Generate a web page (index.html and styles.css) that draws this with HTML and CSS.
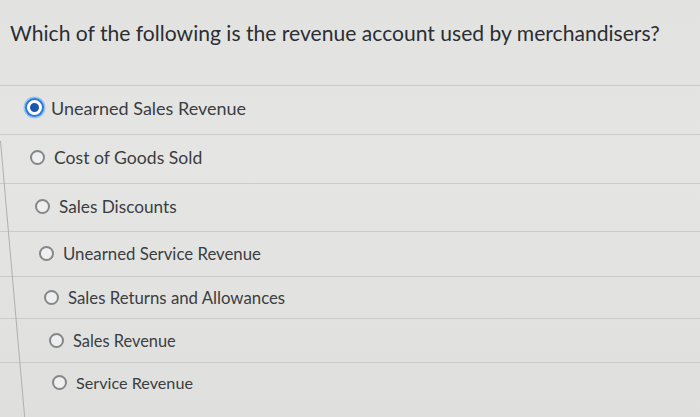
FILE: index.html
```html
<!DOCTYPE html>
<html>
<head>
<meta charset="utf-8">
<link rel="stylesheet" href="styles.css">
</head>
<body>
<div class="quiz">
  <div class="question">Which of the following is the revenue account used by merchandisers?</div>
  <ul class="answers">
    <li class="answer a1"><span class="radio selected"></span><span class="label">Unearned Sales Revenue</span></li>
    <li class="answer a2"><span class="radio"></span><span class="label">Cost of Goods Sold</span></li>
    <li class="answer a3"><span class="radio"></span><span class="label">Sales Discounts</span></li>
    <li class="answer a4"><span class="radio"></span><span class="label">Unearned Service Revenue</span></li>
    <li class="answer a5"><span class="radio"></span><span class="label">Sales Returns and Allowances</span></li>
    <li class="answer a6"><span class="radio"></span><span class="label">Sales Revenue</span></li>
    <li class="answer a7"><span class="radio"></span><span class="label">Service Revenue</span></li>
  </ul>
</div>
</body>
</html>
```
FILE: styles.css
```css
html, body {
  margin: 0;
  padding: 0;
}
body {
  width: 700px;
  height: 417px;
  overflow: hidden;
  background: linear-gradient(180deg, #e2e3e1 0%, #e5e6e4 40%, #dfe0de 100%);
  font-family: Lato, "Open Sans", sans-serif;
  color: #3a3d41;
}
.quiz {
  position: relative;
}
.question {
  border-bottom: 1px solid #c9cac8;
  padding-left: 10px;
  font-size: 21.1px;
  line-height: 24px;
  padding-top: 21px;
  height: 64px;
  color: #2b2e33;
}
.answers {
  list-style: none;
  margin: 0;
  padding: 0;
  position: relative;
}
.answers::before {
  content: "";
  position: absolute;
  left: 0;
  top: 55px;
  bottom: -10px;
  width: 0;
  border-left: 1px solid #aeb0ae;
  transform-origin: top left;
  transform: skewX(5deg);
}
.answer {
  display: flex;
  align-items: center;
  border-bottom: 1px solid #cbccca;
  box-sizing: border-box;
}
.radio {
  flex: none;
  width: 15px;
  height: 15px;
  box-sizing: border-box;
  border: 2px solid #85878a;
  border-radius: 50%;
  background: #eeefee;
  margin-right: 9px;
}
.radio.selected {
  width: 15px;
  height: 15px;
  border: 3px solid #ffffff;
  background: #1b55b0;
  box-shadow: 0 0 0 2px #2b7ad8, 0 0 0 3.5px #9cc3ec;
  margin-right: 9px;
}
.label {
  white-space: nowrap;
}
.a1 { height: 49px; padding-left: 27px; font-size: 18px; padding-bottom: 5px; }
.a2 { height: 49px; padding-left: 30px; font-size: 17.6px; padding-bottom: 3px; }
.a3 { height: 48px; padding-left: 35px; font-size: 17.2px; padding-bottom: 2px; }
.a4 { height: 45px; padding-left: 39px; font-size: 16.8px; padding-bottom: 1px; }
.a5 { height: 42px; padding-left: 44px; font-size: 16.8px; padding-bottom: 1px; }
.a6 { height: 44px; padding-left: 49px; font-size: 16.4px; padding-bottom: 1px; }
.a7 { height: 54px; padding-left: 52px; font-size: 16.2px; padding-bottom: 16px; border-bottom: none; }
```
